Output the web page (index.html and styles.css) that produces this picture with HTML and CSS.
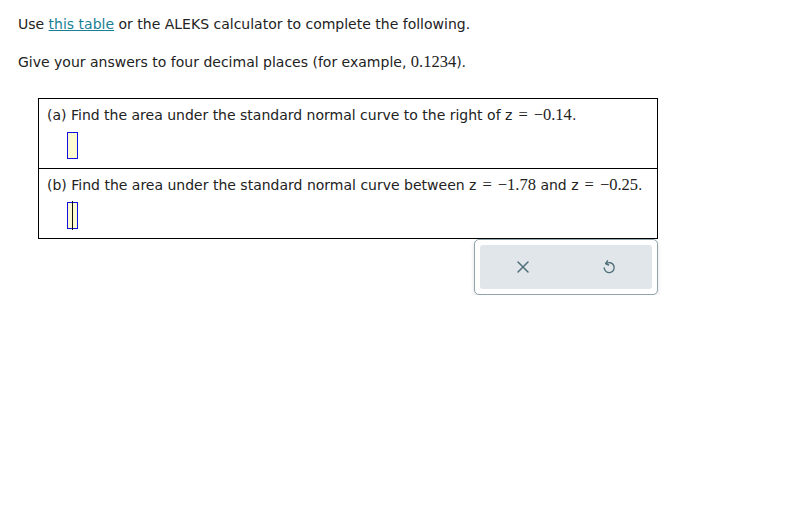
FILE: index.html
```html
<!DOCTYPE html>
<html>
<head>
<meta charset="utf-8">
<link rel="stylesheet" href="styles.css">
</head>
<body>
<div class="page">
  <p class="line first">Use <a class="link" href="#">this table</a> or the ALEKS calculator to complete the following.</p>
  <p class="line second">Give your answers to four decimal places (for example, <span class="num">0.1234</span>).</p>
  <div class="box">
    <div class="row">
      <div class="q">(a) Find the area under the standard normal curve to the right of <span class="z">z</span><span class="num op">=</span><span class="num">&minus;0.14</span>.</div>
      <div class="ans"><span class="input"></span></div>
    </div>
    <div class="row">
      <div class="q">(b) Find the area under the standard normal curve between <span class="z">z</span><span class="num op">=</span><span class="num">&minus;1.78</span> and <span class="z">z</span><span class="num op">=</span><span class="num">&minus;0.25</span>.</div>
      <div class="ans"><span class="input active"><span class="caret"></span></span></div>
    </div>
  </div>
  <div class="toolwrap">
    <div class="tools">
      <div class="inner">
        <button class="btn" aria-label="clear">
          <svg width="14" height="14" viewBox="0 0 14 14"><path d="M2 2 L12 12 M12 2 L2 12" stroke="#4f6e79" stroke-width="1.5" fill="none" stroke-linecap="round"/></svg>
        </button>
        <button class="btn" aria-label="undo">
          <svg width="14" height="16" viewBox="0 0 14 16"><path d="M4.2 4.6 A5 5 0 1 1 2.2 9" stroke="#4f6e79" stroke-width="1.4" fill="none" stroke-linecap="round"/><path d="M5.5 1.8 L3.6 4.6 L6.6 6" stroke="#4f6e79" stroke-width="1.4" fill="none" stroke-linecap="round" stroke-linejoin="round"/></svg>
        </button>
      </div>
    </div>
  </div>
</div>
</body>
</html>
```

FILE: styles.css
```css
html, body {
  margin: 0;
  padding: 0;
  background: #ffffff;
}
.page {
  padding: 14px 0 0 18px;
  font-family: "DejaVu Sans", Verdana, sans-serif;
  font-size: 14px;
  color: #222222;
}
.line {
  margin: 0;
  line-height: 20px;
}
.second {
  margin-top: 18px;
}
.link {
  color: #1a7f94;
  text-decoration: underline;
}
.num {
  font-family: "Liberation Serif", "Times New Roman", serif;
  font-size: 16.5px;
}
.op {
  margin: 0 6px;
}
.z {
  font-family: "DejaVu Sans", sans-serif;
}
.box {
  margin: 26px 0 0 20px;
  width: 618px;
  border: 1px solid #000000;
}
.row {
  height: 69px;
  box-sizing: border-box;
  padding: 7px 0 0 8px;
}
.row + .row {
  border-top: 1px solid #000000;
  height: 70px;
}
.q {
  line-height: 18px;
}
.ans {
  padding: 8px 0 0 20px;
}
.input {
  display: block;
  width: 9px;
  height: 25px;
  border: 1px solid #1010e0;
  background: #fffbd0;
  position: relative;
}
.caret {
  position: absolute;
  left: 4px;
  top: -2px;
  width: 1px;
  height: 29px;
  background: #111111;
}
.toolwrap {
  width: 640px;
  display: flex;
  justify-content: flex-end;
  margin-top: 0;
}
.tools {
  width: 184px;
  height: 56px;
  box-sizing: border-box;
  border: 1px solid #8fa4ad;
  border-radius: 5px;
  background: #ffffff;
  padding: 5px;
  box-shadow: 0 2px 4px rgba(0,0,0,0.12);
}
.inner {
  display: flex;
  height: 44px;
  background: #e0e6e9;
  border-radius: 3px;
}
.btn {
  flex: 1;
  border: 0;
  background: transparent;
  display: flex;
  align-items: center;
  justify-content: center;
  padding: 0;
}
```
